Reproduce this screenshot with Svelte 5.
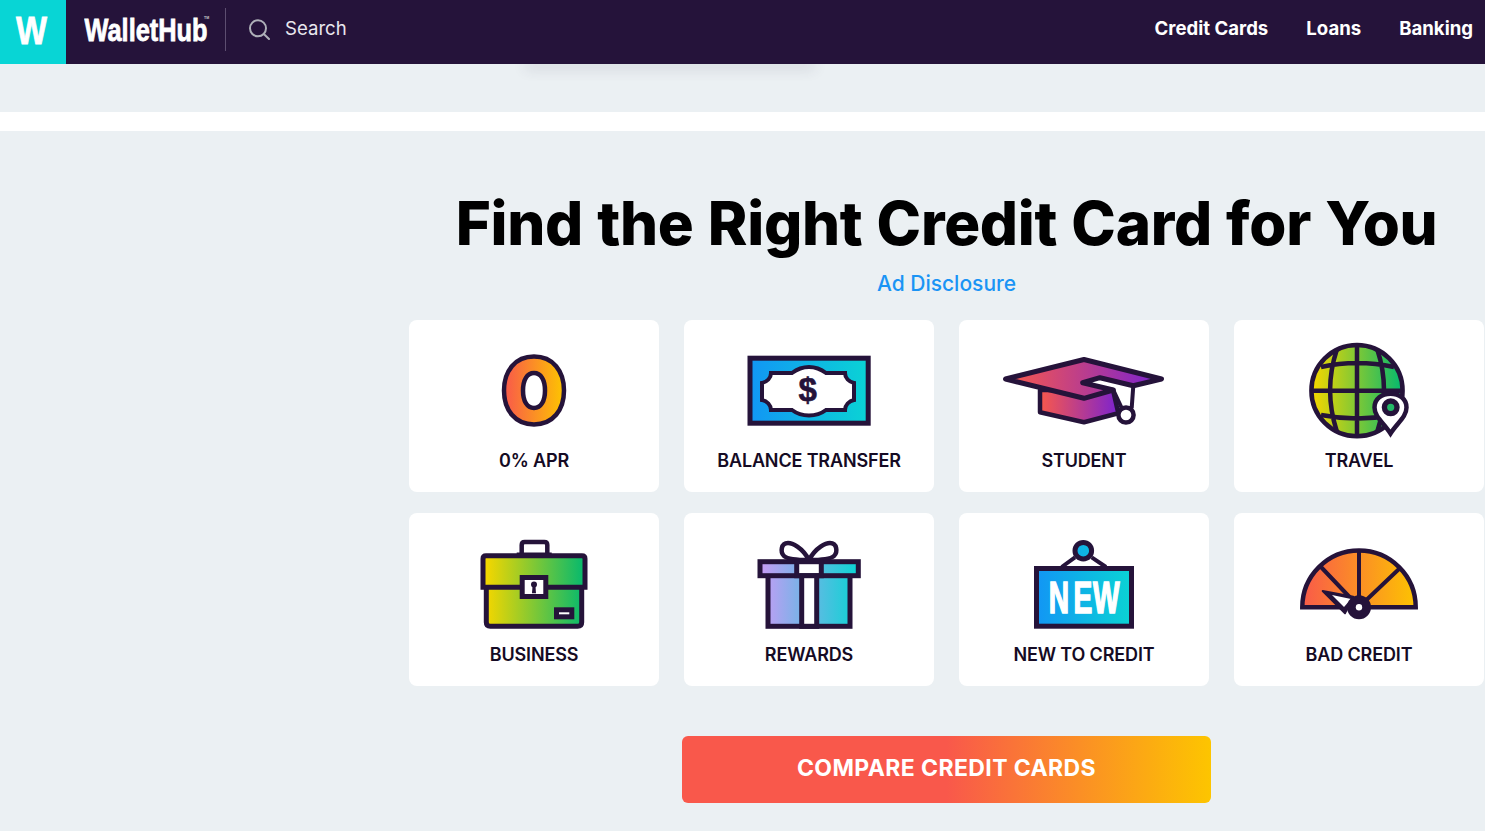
<script>
    const ink = '#25133a';
    const cards = [
        { id: 'apr', label: '0% APR' },
        { id: 'transfer', label: 'BALANCE TRANSFER' },
        { id: 'student', label: 'STUDENT' },
        { id: 'travel', label: 'TRAVEL' },
        { id: 'business', label: 'BUSINESS' },
        { id: 'rewards', label: 'REWARDS' },
        { id: 'new', label: 'NEW TO CREDIT' },
        { id: 'bad', label: 'BAD CREDIT' },
    ];
    const nav = ['Credit Cards', 'Loans', 'Banking'];
</script>

<header class="topbar">
    <div class="brand-box">
        <svg width="66" height="64" viewBox="0 0 66 64">
            <text x="16" y="44" class="logo-text heavy" font-size="39" fill="#fff" textLength="31" lengthAdjust="spacingAndGlyphs">W</text>
        </svg>
    </div>
    <svg class="wordmark" width="160" height="40" viewBox="0 0 160 40">
        <text x="0.5" y="32.7" class="logo-text heavy" font-size="32" fill="#fff" textLength="123" lengthAdjust="spacingAndGlyphs">WalletHub</text>
        <text x="120" y="11" class="logo-text" font-size="3.5" fill="#ccc">TM</text>
    </svg>
    <span class="divider"></span>
    <div class="search">
        <svg width="24" height="24" viewBox="0 0 24 24" fill="none" stroke="#aeb0b8" stroke-width="2">
            <circle cx="9" cy="12.3" r="8" />
            <path d="M14.8 18 L20 23" stroke-linecap="round" />
        </svg>
        <span>Search</span>
    </div>
    <nav class="links">
        {#each nav as item}
            <a href="#top">{item}</a>
        {/each}
    </nav>
</header>
<div class="header-shadow"></div>

<div class="gap-band"></div>
<div class="white-band"></div>

<main class="finder">
    <h1>Find the Right Credit Card for You</h1>
    <a class="disclosure" href="#top">Ad Disclosure</a>

    <div class="grid">
        {#each cards as card}
            <a class="card" href="#top">
                <svg class="icon" width="170" height="100" viewBox="0 0 170 100">
                    {#if card.id === 'apr'}
                        <defs>
                            <linearGradient id="g-apr" gradientUnits="userSpaceOnUse" x1="55" x2="115" y1="0" y2="0">
                                <stop offset="0" stop-color="#f9584b" /><stop offset="1" stop-color="#fdc500" />
                            </linearGradient>
                        </defs>
                        <path d="M85 16.5 C104 16.5 115 31 115 50.5 C115 70 104 84.5 85 84.5 C66 84.5 55 70 55 50.5 C55 31 66 16.5 85 16.5 Z" fill="url(#g-apr)" stroke={ink} stroke-width="4.5" />
                        <path d="M85 33 C92 33 96 40 96 50.5 C96 61 92 68 85 68 C78 68 74 61 74 50.5 C74 40 78 33 85 33 Z" fill="#fff" stroke={ink} stroke-width="4.5" />
                    {:else if card.id === 'transfer'}
                        <defs>
                            <linearGradient id="g-transfer" gradientUnits="userSpaceOnUse" x1="24" x2="146" y1="0" y2="0">
                                <stop offset="0" stop-color="#1295f5" /><stop offset="1" stop-color="#0ad4d4" />
                            </linearGradient>
                        </defs>
                        <rect x="26" y="18.2" width="118.2" height="65" fill="url(#g-transfer)" stroke={ink} stroke-width="5" />
                        <path d="M47 33 H68 C72 30 78 27 85 27 C92 27 98 30 102 33 H121 C121 38 125 42 130 43 V60 C125 61 121 65 121 70 H102 C98 73 92 75.5 85 75.5 C78 75.5 72 73 68 70 H47 C47 65 43 61 38 60 V43 C43 42 47 38 47 33 Z" fill="#fff" stroke={ink} stroke-width="4" />
                        <text x="83.5" y="60.7" text-anchor="middle" class="logo-text" font-size="33" fill={ink} stroke={ink} stroke-width="0.6">$</text>
                    {:else if card.id === 'student'}
                        <defs>
                            <linearGradient id="g-student" gradientUnits="userSpaceOnUse" x1="10" x2="160" y1="0" y2="0">
                                <stop offset="0" stop-color="#f9584b" /><stop offset="1" stop-color="#7b22d0" />
                            </linearGradient>
                            <linearGradient id="g-student2" gradientUnits="userSpaceOnUse" x1="41" x2="120" y1="0" y2="0">
                                <stop offset="0" stop-color="#f9584b" /><stop offset="1" stop-color="#7b22d0" />
                            </linearGradient>
                        </defs>
                        <path d="M41 50 V72.3 L85 82.3 L119.3 73.3 L114 50 Z" fill="url(#g-student2)" stroke={ink} stroke-width="4.5" stroke-linejoin="round" />
                        <path d="M6.5 39 L85 19.5 L162.5 39 L134.3 45.7 L101 37.7 L83.7 42.7 L114.3 50 L85 58.3 Z" fill="url(#g-student)" stroke={ink} stroke-width="5" stroke-linejoin="round" />
                        <path d="M114.3 50 L122.7 68 M134.3 45.7 L132.7 68" stroke={ink} stroke-width="4" fill="none" />
                        <circle cx="127" cy="75" r="7.6" fill="#fff" stroke={ink} stroke-width="4.5" />
                    {:else if card.id === 'travel'}
                        <defs>
                            <linearGradient id="g-travel" gradientUnits="userSpaceOnUse" x1="40" x2="125" y1="0" y2="0">
                                <stop offset="0" stop-color="#f2d600" /><stop offset="1" stop-color="#0dba6a" />
                            </linearGradient>
                        </defs>
                        <circle cx="83" cy="50.7" r="45.6" fill="url(#g-travel)" stroke={ink} stroke-width="4.5" />
                        <path d="M83 5 V96 M37.4 50.7 H128.6 M47 27 Q83 19 120 27 M47 75 Q83 82 120 75 M62.7 10 Q49.5 50 62.7 91 M103.5 10 Q116.5 50 103.5 91" fill="none" stroke={ink} stroke-width="4.5" />
                        <path d="M116.5 93.5 C110 83 100.5 77 100.5 67.5 C100.5 58.5 108 53.7 116.5 53.7 C125 53.7 132.5 58.5 132.5 67.5 C132.5 77 123 83 116.5 93.5 Z" fill="#fff" stroke={ink} stroke-width="4.5" />
                        <circle cx="116.7" cy="67.3" r="6.3" fill="#24b868" stroke={ink} stroke-width="5.4" />
                    {:else if card.id === 'business'}
                        <defs>
                            <linearGradient id="g-business" gradientUnits="userSpaceOnUse" x1="38" x2="132" y1="0" y2="0">
                                <stop offset="0" stop-color="#f2d600" /><stop offset="1" stop-color="#0dba6a" />
                            </linearGradient>
                        </defs>
                        <path d="M72.7 22 V12 Q72.7 9 75.7 9 H95.3 Q98.3 9 98.3 12 V22" fill="#fff" stroke={ink} stroke-width="4.5" />
                        <rect x="67.7" y="19.5" width="35" height="3" fill={ink} />
                        <path d="M37.3 54.3 V89.3 Q37.3 93.3 41.3 93.3 H128.7 Q132.7 93.3 132.7 89.3 V54.3" fill="url(#g-business)" stroke={ink} stroke-width="5" />
                        <path d="M37 22.7 H133 Q136 22.7 136 25.7 V54.3 H34 V25.7 Q34 22.7 37 22.7 Z" fill="url(#g-business)" stroke={ink} stroke-width="5" />
                        <rect x="73.2" y="44.5" width="23.6" height="19" fill="#fff" stroke={ink} stroke-width="5" />
                        <circle cx="85" cy="51.5" r="3" fill={ink} />
                        <path d="M83.6 52 H86.4 L87 60.3 H83 Z" fill={ink} />
                        <rect x="105" y="74.3" width="20.3" height="12" fill={ink} />
                        <rect x="110" y="79.3" width="10.3" height="2" fill="#fff" />
                    {:else if card.id === 'rewards'}
                        <defs>
                            <linearGradient id="g-rewards" gradientUnits="userSpaceOnUse" x1="36" x2="134" y1="0" y2="0">
                                <stop offset="0" stop-color="#c89bf5" /><stop offset="1" stop-color="#0ad4d4" />
                            </linearGradient>
                        </defs>
                        <path d="M85 27 C78 14 68 10 64 10 C57 10 56 19 60 23 C63 26 75 27 85 27 C95 27 107 26 110 23 C114 19 113 10 106 10 C102 10 92 14 85 27 Z" fill="#fff" stroke={ink} stroke-width="4.5" stroke-linejoin="round" />
                        <rect x="44" y="40" width="82" height="53.3" fill="url(#g-rewards)" stroke={ink} stroke-width="5" />
                        <rect x="36" y="28.7" width="98.3" height="14" fill="url(#g-rewards)" stroke={ink} stroke-width="5" />
                        <rect x="72.7" y="28.7" width="24.6" height="14" fill="#fff" stroke={ink} stroke-width="5" />
                        <rect x="77.7" y="42.7" width="15" height="50.6" fill="#fff" stroke={ink} stroke-width="5" />
                    {:else if card.id === 'new'}
                        <defs>
                            <linearGradient id="g-new" gradientUnits="userSpaceOnUse" x1="36" x2="134" y1="0" y2="0">
                                <stop offset="0" stop-color="#1295f5" /><stop offset="1" stop-color="#0ad4d4" />
                            </linearGradient>
                        </defs>
                        <path d="M76 24.3 L62.7 34 M92.7 24.3 L107 34" stroke={ink} stroke-width="4" />
                        <circle cx="84.3" cy="17.7" r="8.3" fill="url(#g-new)" stroke={ink} stroke-width="5" />
                        <rect x="37.5" y="35.5" width="95" height="57.7" fill="url(#g-new)" stroke={ink} stroke-width="5" />
                        <text x="0 38.5 69" y="0" transform="translate(49.8 80.3) scale(0.64 1)" class="logo-text" font-size="44" fill="#fff" stroke="#fff" stroke-width="1.6">NEW</text>
                    {:else}
                        <defs>
                            <linearGradient id="g-bad" gradientUnits="userSpaceOnUse" x1="26" x2="144" y1="0" y2="0">
                                <stop offset="0" stop-color="#f9584b" /><stop offset="1" stop-color="#fdc500" />
                            </linearGradient>
                        </defs>
                        <path d="M28.3 74.3 A56.7 56.7 0 0 1 141.7 74.3 Z" fill="url(#g-bad)" stroke={ink} stroke-width="4.5" />
                        <path d="M85 74 V18 M85 74 L47 34 M85 74 L125 36" stroke={ink} stroke-width="4" fill="none" />
                        <path d="M48.7 58 L79.3 63.7 L71 80.3 Z" fill={ink} stroke={ink} stroke-width="2" stroke-linejoin="round" />
                        <path d="M58 62 L77 66 L70 74 Z" fill="#fff" />
                        <circle cx="85" cy="74.3" r="12" fill={ink} />
                        <circle cx="85" cy="74.3" r="3.2" fill="#fff" />
                    {/if}
                </svg>
                <span>{card.label}</span>
            </a>
        {/each}
    </div>

    <a class="compare" href="#top">COMPARE CREDIT CARDS</a>
</main>

<style>
    :global(body) {
        background: #ebf0f3;
        font-family: Inter, "Open Sans", sans-serif;
        overflow: hidden;
    }

    .topbar {
        display: flex;
        align-items: center;
        box-sizing: border-box;
        height: 64px;
        padding-bottom: 8px;
        background: #25133a;
        position: relative;
        z-index: 2;
    }

    .brand-box {
        width: 66px;
        height: 64px;
        background: #08d5d5;
        flex: none;
        align-self: flex-start;
    }

    .brand-box svg,
    .wordmark {
        display: block;
    }

    .logo-text {
        font-family: "Liberation Sans", sans-serif;
        font-weight: 700;
    }

    .heavy {
        stroke: #fff;
        stroke-width: 0.8px;
    }

    .wordmark {
        margin-left: 18px;
        margin-right: -30px;
        flex: none;
    }

    .divider {
        width: 1px;
        height: 43px;
        margin-left: 11px;
        align-self: flex-start;
        margin-top: 8px;
        background: #5d4e70;
    }

    .search {
        display: flex;
        align-items: center;
        gap: 12px;
        margin-left: 23px;
        color: #e9e7ee;
        font-size: 18.6px;
    }

    .links {
        margin-left: auto;
        display: flex;
        gap: 38px;
        padding-right: 12px;
    }

    .links a {
        color: #fff;
        font-size: 18.6px;
        font-weight: 700;
        text-decoration: none;
    }

    .header-shadow {
        position: absolute;
        top: 56px;
        left: 525px;
        width: 290px;
        height: 8px;
        box-shadow: 0 5px 14px rgba(60, 50, 80, 0.14);
    }

    .gap-band {
        height: 48px;
    }

    .white-band {
        height: 19px;
        background: #fff;
    }

    .finder {
        width: 1075px;
        margin-left: 409px;
        display: flex;
        flex-direction: column;
        align-items: center;
    }

    h1 {
        margin: 54px 0 0;
        font-size: 60px;
        line-height: 76px;
        font-weight: 800;
        letter-spacing: -0.3px;
        word-spacing: 1.4px;
        color: #000;
        white-space: nowrap;
    }

    .disclosure {
        margin-top: 9px;
        font-size: 21px;
        line-height: 28px;
        font-weight: 500;
        color: #1a94f5;
        text-decoration: none;
    }

    .grid {
        margin-top: 22px;
        width: 100%;
        display: grid;
        grid-template-columns: repeat(4, 250px);
        grid-template-rows: 172px 173px;
        column-gap: 25px;
        row-gap: 21px;
    }

    .card {
        display: flex;
        flex-direction: column;
        align-items: center;
        background: #fff;
        border-radius: 8px;
        padding-top: 20px;
        color: #150b24;
        text-decoration: none;
        font-size: 18px;
        font-weight: 600;
        letter-spacing: -0.15px;
    }

    .icon {
        display: block;
        flex: none;
    }

    .card span {
        margin-top: 10px;
        line-height: 22px;
    }

    .card:nth-child(n + 5) span {
        margin-top: 11px;
    }

    .compare {
        margin-top: 50px;
        box-sizing: border-box;
        padding-bottom: 3px;
        width: 529px;
        height: 67px;
        display: flex;
        align-items: center;
        justify-content: center;
        border-radius: 6px;
        background: linear-gradient(90deg, #f9584b 0%, #f9584b 50%, #fdc500 100%);
        color: #fff;
        font-size: 23px;
        font-weight: 700;
        letter-spacing: 0.4px;
        text-decoration: none;
    }
</style>
